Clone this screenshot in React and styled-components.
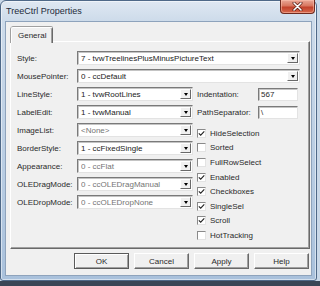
import styled, { createGlobalStyle } from "styled-components";

const GlobalStyle = createGlobalStyle`
  html, body {
    margin: 0;
    padding: 0;
  }
  body {
    width: 320px;
    height: 286px;
    overflow: hidden;
    background: linear-gradient(to bottom, #c9d8e8 0, #c9d8e8 281px, #3a4656 281px);
    font-family: "Liberation Sans", Arial, sans-serif;
    font-size: 8px;
    color: #2a2a2a;
  }
`;

const fullRows = [
  { label: "Style:", value: "7 - tvwTreelinesPlusMinusPictureText" },
  { label: "MousePointer:", value: "0 - ccDefault" },
];

const leftRows = [
  { label: "LineStyle:", value: "1 - tvwRootLines" },
  { label: "LabelEdit:", value: "1 - tvwManual" },
  { label: "ImageList:", value: "<None>", dim: true },
  { label: "BorderStyle:", value: "1 - ccFixedSingle" },
  { label: "Appearance:", value: "0 - ccFlat", dim: true },
  { label: "OLEDragMode:", value: "0 - ccOLEDragManual", dim: true },
  { label: "OLEDropMode:", value: "0 - ccOLEDropNone", dim: true },
];

const checks = [
  { label: "HideSelection", on: true },
  { label: "Sorted", on: false },
  { label: "FullRowSelect", on: false },
  { label: "Enabled", on: true },
  { label: "Checkboxes", on: true },
  { label: "SingleSel", on: true },
  { label: "Scroll", on: true },
  { label: "HotTracking", on: false },
];

const Combo = ({ value, dim }) => (
  <ComboBox>
    <ComboText $dim={dim}>{value}</ComboText>
    <DropButton>
      <Arrow />
    </DropButton>
  </ComboBox>
);

const Check = ({ on }) => (
  <CheckBox>
    {on && (
      <svg width="7" height="7" viewBox="0 0 7 7">
        <path d="M0.8 3.3 L2.7 5.2 L6.3 1.4" fill="none" stroke="#222" strokeWidth="1.1" />
      </svg>
    )}
  </CheckBox>
);

const App = () => {
  return (
    <>
      <GlobalStyle />
      <Window>
        <TitleBar>
          <Title>TreeCtrl Properties</Title>
          <CloseButton>
            <svg width="11" height="9" viewBox="0 0 11 9">
              <path d="M2 1 L9 8 M9 1 L2 8" stroke="#5a1d14" strokeWidth="3" strokeLinecap="round" />
              <path d="M2 1 L9 8 M9 1 L2 8" stroke="#fff" strokeWidth="1.6" strokeLinecap="round" />
            </svg>
          </CloseButton>
        </TitleBar>
        <Client>
          <TabStrip>
            <Tab>General</Tab>
          </TabStrip>
          <Panel>
            <FullGrid>
              {fullRows.map((r) => (
                <Row key={r.label}>
                  <Label>{r.label}</Label>
                  <Combo value={r.value} />
                </Row>
              ))}
            </FullGrid>
            <Lower>
              <LeftColumn>
                {leftRows.map((r) => (
                  <Row key={r.label}>
                    <Label>{r.label}</Label>
                    <Combo value={r.value} dim={r.dim} />
                  </Row>
                ))}
              </LeftColumn>
              <RightColumn>
                <InputRow>
                  <SideLabel>Indentation:</SideLabel>
                  <TextBox>567</TextBox>
                </InputRow>
                <InputRow>
                  <SideLabel>PathSeparator:</SideLabel>
                  <TextBox>\</TextBox>
                </InputRow>
                <CheckList>
                  {checks.map((c) => (
                    <CheckRow key={c.label}>
                      <Check on={c.on} />
                      <span>{c.label}</span>
                    </CheckRow>
                  ))}
                </CheckList>
              </RightColumn>
            </Lower>
          </Panel>
          <ButtonBar>
            <Button $primary>OK</Button>
            <Button>Cancel</Button>
            <Button>Apply</Button>
            <Button>Help</Button>
          </ButtonBar>
        </Client>
      </Window>
    </>
  );
};

export default App;

const Window = styled.div`
  width: 317px;
  height: 281px;
  box-sizing: border-box;
  border: 1px solid #4f6988;
  border-radius: 6px 6px 3px 3px;
  background: linear-gradient(
    to bottom,
    #dfe8f2 0,
    #cddbea 20px,
    #b9cde3 60%,
    #a9c1dc 100%
  );
  padding: 0 4px 4px 4px;
  display: flex;
  flex-direction: column;
  box-shadow: inset 0 0 0 1px rgba(255, 255, 255, 0.5);
`;

const TitleBar = styled.div`
  height: 20px;
  display: flex;
  align-items: flex-start;
  justify-content: space-between;
`;

const Title = styled.div`
  font-size: 9px;
  color: #1e2b3a;
  padding: 5px 0 0 1px;
`;

const CloseButton = styled.div`
  width: 35px;
  height: 14px;
  margin-top: -1px;
  margin-right: -3px;
  box-sizing: border-box;
  border: 1px solid #6e2a1f;
  border-top: none;
  border-radius: 0 0 4px 4px;
  background: linear-gradient(to bottom, #e9a796 0, #d8765f 45%, #c2422b 55%, #d7694d 100%);
  display: flex;
  align-items: center;
  justify-content: center;
  box-shadow: inset 0 0 0 1px rgba(255, 200, 180, 0.5);
`;

const Client = styled.div`
  flex: 1;
  background: #f0f0f0;
  border: 1px solid #8ea3bc;
  padding: 5px 1px 0 4px;
  display: flex;
  flex-direction: column;
`;

const TabStrip = styled.div`
  display: flex;
  height: 15px;
  position: relative;
  z-index: 1;
  margin-bottom: -1px;
`;

const Tab = styled.div`
  box-sizing: border-box;
  height: 16px;
  padding: 2px 6px 0 6px;
  margin-left: 1px;
  background: #f0f0f0;
  border-top: 1px solid #fff;
  border-left: 1px solid #fff;
  border-right: 1px solid #696969;
  box-shadow: inset -1px 0 0 #a0a0a0, -1px 0 0 #a0a0a0, 0 -1px 0 #a0a0a0;
  border-radius: 2px 2px 0 0;
  line-height: 11px;
`;

const Panel = styled.div`
  height: 208px;
  box-sizing: border-box;
  border-top: 1px solid #fff;
  border-left: 1px solid #fff;
  border-right: 1px solid #696969;
  border-bottom: 1px solid #696969;
  box-shadow: inset -1px -1px 0 #a0a0a0;
  padding: 9px 9px 0 6px;
  display: flex;
  flex-direction: column;
  gap: 4px;
`;

const FullGrid = styled.div`
  display: flex;
  flex-direction: column;
  gap: 4px;
`;

const Row = styled.div`
  display: grid;
  grid-template-columns: 60px 1fr;
  align-items: center;
  height: 14px;
`;

const Label = styled.span`
  white-space: nowrap;
`;

const ComboBox = styled.div`
  height: 14px;
  box-sizing: border-box;
  border: 1px solid;
  border-color: #7a7a7a #e3e3e3 #e3e3e3 #7a7a7a;
  box-shadow: inset 1px 1px 0 #c4c4c4;
  background: #fff;
  display: flex;
  align-items: center;
  padding: 0 1px 0 3px;
`;

const ComboText = styled.span`
  flex: 1;
  white-space: nowrap;
  overflow: hidden;
  color: ${(p) => (p.$dim ? "#747474" : "#222")};
`;

const DropButton = styled.div`
  width: 11px;
  height: 10px;
  box-sizing: border-box;
  background: #f0f0f0;
  border: 1px solid;
  border-color: #fff #696969 #696969 #fff;
  display: flex;
  align-items: center;
  justify-content: center;
`;

const Arrow = styled.div`
  width: 0;
  height: 0;
  border-left: 2.5px solid transparent;
  border-right: 2.5px solid transparent;
  border-top: 3px solid #000;
`;

const Lower = styled.div`
  display: flex;
  align-items: flex-start;
  gap: 4px;
`;

const LeftColumn = styled.div`
  width: 176px;
  display: flex;
  flex-direction: column;
  gap: 4px;
`;

const RightColumn = styled.div`
  flex: 1;
  display: flex;
  flex-direction: column;
  gap: 4px;
`;

const InputRow = styled.div`
  height: 14px;
  display: flex;
  align-items: center;
`;

const SideLabel = styled.span`
  width: 61px;
  white-space: nowrap;
`;

const TextBox = styled.div`
  width: 40px;
  height: 13px;
  box-sizing: border-box;
  border: 1px solid;
  border-color: #7a7a7a #e3e3e3 #e3e3e3 #7a7a7a;
  box-shadow: inset 1px 1px 0 #c4c4c4;
  background: #fff;
  padding: 0 2px;
  line-height: 11px;
`;

const CheckList = styled.div`
  margin-top: 3px;
  display: flex;
  flex-direction: column;
`;

const CheckRow = styled.div`
  height: 14.6px;
  display: flex;
  align-items: center;
  gap: 4px;
`;

const CheckBox = styled.div`
  width: 9px;
  height: 9px;
  box-sizing: border-box;
  border: 1px solid;
  border-color: #8a8a8a #e3e3e3 #e3e3e3 #8a8a8a;
  background: #fff;
  display: flex;
  align-items: center;
  justify-content: center;
`;

const ButtonBar = styled.div`
  display: flex;
  justify-content: flex-end;
  gap: 5px;
  margin-top: 4px;
  padding-right: 1px;
`;

const Button = styled.div`
  width: 55px;
  height: 16px;
  box-sizing: border-box;
  background: #f0f0f0;
  border: 1px solid;
  border-color: ${(p) => (p.$primary ? "#5a5a5a" : "#fff #696969 #696969 #fff")};
  box-shadow: ${(p) =>
    p.$primary
      ? "inset 1px 1px 0 #fff, inset -1px -1px 0 #a0a0a0"
      : "inset -1px -1px 0 #a0a0a0"};
  display: flex;
  align-items: center;
  justify-content: center;
`;
